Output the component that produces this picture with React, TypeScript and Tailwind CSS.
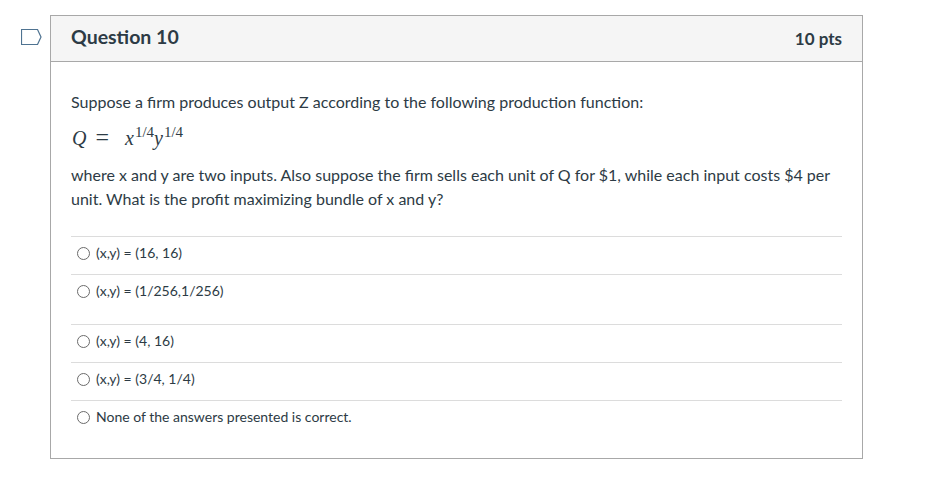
import React from "react";

const options = [
  { text: "(x,y) = (16, 16)", extra: false },
  { text: "(x,y) = (1/256,1/256)", extra: true },
  { text: "(x,y) = (4, 16)", extra: false },
  { text: "(x,y) = (3/4, 1/4)", extra: false },
  { text: "None of the answers presented is correct.", extra: false },
];

export default function App() {
  return (
    <div
      className="w-[949px] h-[478px] bg-white text-[#2d3b45] relative"
      style={{ fontFamily: "Lato, 'Noto Sans', sans-serif" }}
    >
      <div className="flex pt-[15px]">
        <div className="w-[50px] flex justify-start pl-[21px] pt-[14px]">
          <svg width="21" height="16" viewBox="0 0 21 16">
            <path d="M0.5 0.5 H16.5 L20 8 L16.5 15.5 H0.5 Z" fill="none" stroke="#4f7391" strokeWidth="1.2" />
          </svg>
        </div>
        <div className="w-[813px] h-[444px] border border-[#a8a8a8] flex flex-col">
          <div className="h-[46px] bg-[#f5f5f5] border-b border-[#a8a8a8] flex items-center justify-between pl-[20px] pr-[20px]">
            <div className="text-[19.5px] font-bold text-[#2d3b45] leading-none mt-[-3px]">Question 10</div>
            <div className="text-[17px] font-bold text-[#2d3b45] leading-none mt-[-1px]">10 pts</div>
          </div>
          <div className="px-[20px] pt-[28px] text-[16px] leading-[24px]">
            <p>Suppose a firm produces output Z according to the following production function:</p>
            <div
              className="mt-[11px] h-[24px] flex items-baseline pl-[1px] text-[20px]"
              style={{ fontFamily: "'Liberation Serif', 'DejaVu Serif', serif" }}
            >
              <span className="italic">Q</span>
              <span className="ml-[9px] text-[24px] leading-none">=</span>
              <span className="italic ml-[16px]">x</span>
              <span className="text-[15px] relative top-[-8px] ml-[1px]">1/4</span>
              <span className="italic">y</span>
              <span className="text-[15px] relative top-[-8px] ml-[1px]">1/4</span>
            </div>
            <p className="mt-[14px]">
              where x and y are two inputs. Also suppose the firm sells each unit of Q for $1, while each input costs $4 per unit. What is the profit maximizing bundle of x and y?
            </p>
            <div className="mt-[25px]">
              {options.map((o, i) => (
                <div
                  key={i}
                  className={`border-t border-[#dcdcdc] flex items-start pl-[6px] pt-[6px] ${o.extra ? "h-[50px]" : "h-[38px]"}`}
                >
                  <span className="w-[13px] h-[13px] mt-[4px] rounded-full border border-[#6b6b6b] bg-white shrink-0" />
                  <span className="ml-[6px] text-[14px] leading-[20px] text-[#2d3b45]">{o.text}</span>
                </div>
              ))}
            </div>
          </div>
        </div>
      </div>
    </div>
  );
}
